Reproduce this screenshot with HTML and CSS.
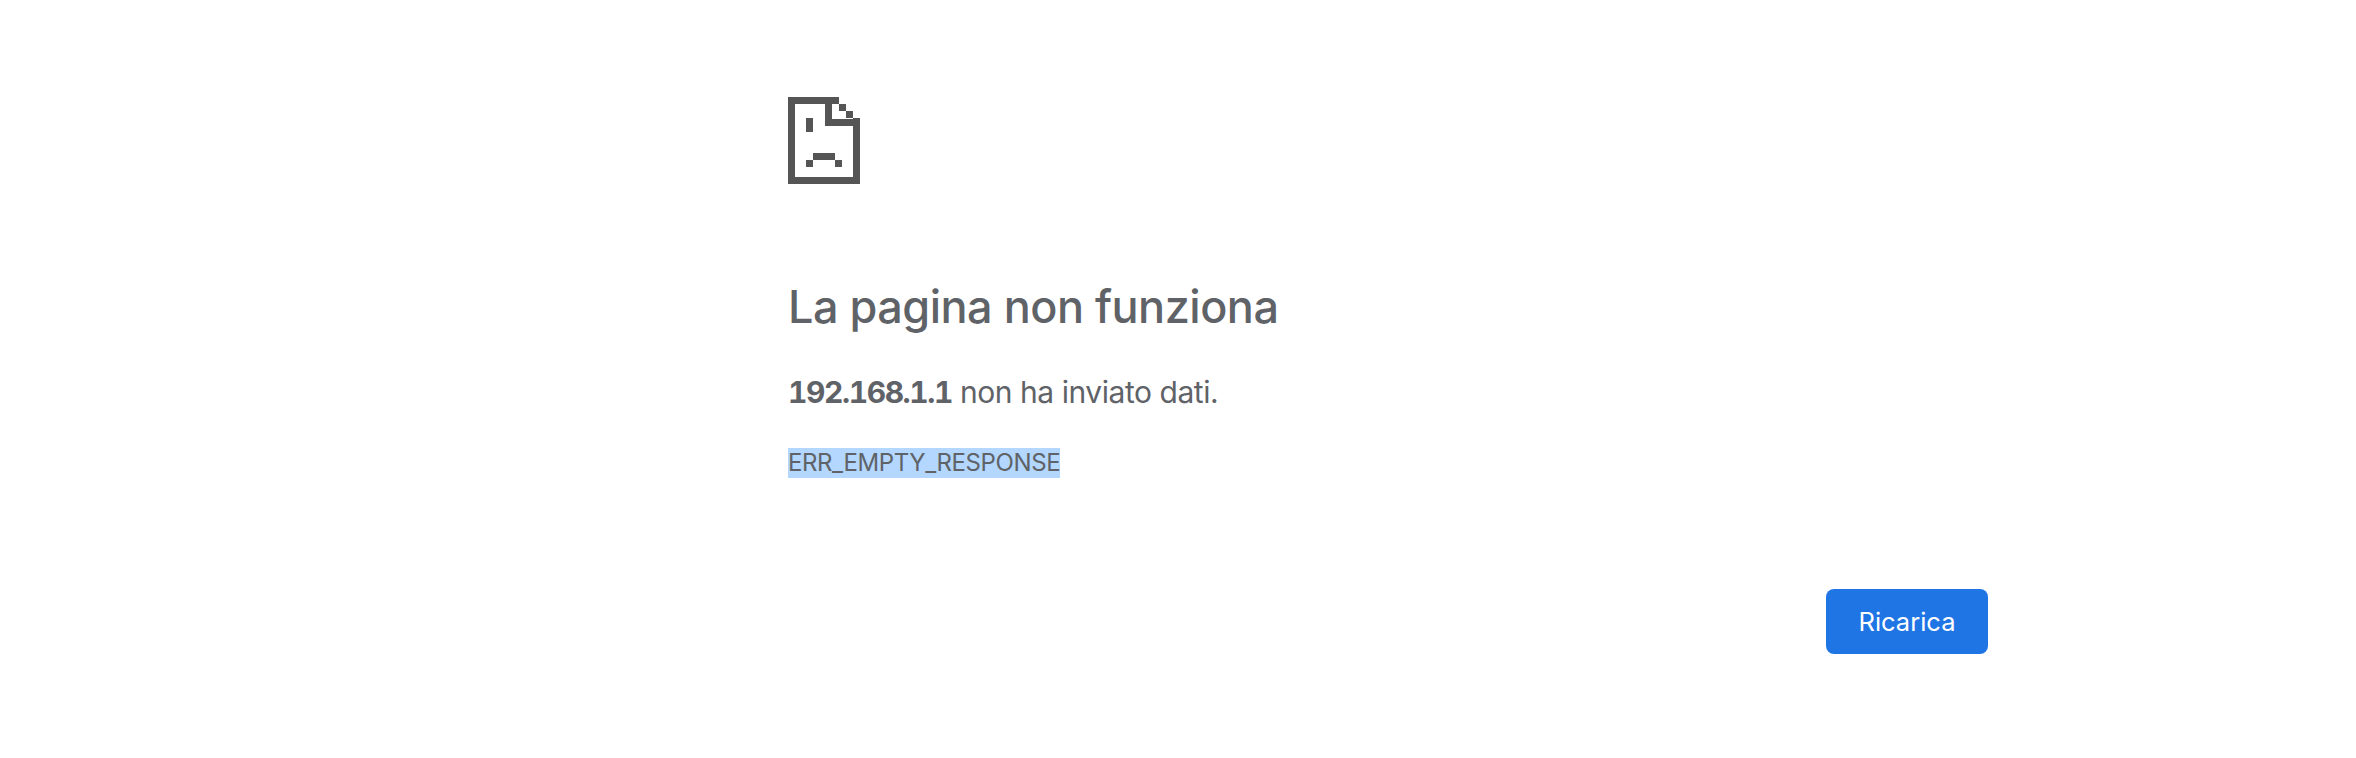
FILE: index.html
```html
<!DOCTYPE html>
<html lang="it">
<head>
<meta charset="utf-8">
<title>192.168.1.1</title>
<link rel="stylesheet" href="styles.css">
</head>
<body>
<main class="page">
  <svg class="icon" width="72" height="87" viewBox="0 0 72 87" shape-rendering="crispEdges" aria-hidden="true">
    <path class="icon-shape" d="M0 0H51V7H7V80H65V29H72V87H0Z"/>
    <path class="icon-shape" d="M37 7H44V22H65V29H37Z"/>
    <rect class="icon-shape" x="51" y="7" width="7" height="7"/>
    <rect class="icon-shape" x="58" y="14" width="7" height="7"/>
    <rect class="icon-shape" x="65" y="21" width="7" height="8"/>
    <rect class="icon-shape" x="18" y="21" width="7" height="14"/>
    <rect class="icon-shape" x="25" y="56" width="22" height="7"/>
    <rect class="icon-shape" x="18" y="63" width="7" height="7"/>
    <rect class="icon-shape" x="47" y="63" width="7" height="7"/>
  </svg>
  <h1 class="title">La pagina non funziona</h1>
  <p class="message"><strong>192.168.1.1</strong> non ha inviato dati.</p>
  <div class="code"><span class="selected">ERR_EMPTY_RESPONSE</span></div>
  <div class="actions"><button class="reload" type="button">Ricarica</button></div>
</main>
</body>
</html>
```

FILE: styles.css
```css
html, body {
  margin: 0;
  background: #fff;
}
.page {
  box-sizing: border-box;
  height: 758px;
  padding: 97px 368px 0 788px;
  font-family: Inter, "Liberation Sans", sans-serif;
  color: #5f6368;
}
.icon {
  display: block;
  margin: 0;
}
.icon-shape {
  fill: #555;
}
.title {
  margin: 95px 0 0;
  font-size: 45px;
  line-height: 56px;
  font-weight: 550;
  letter-spacing: -0.5px;
}
.message {
  margin: 36px 0 0;
  font-size: 30px;
  line-height: 42px;
  letter-spacing: -0.45px;
}
.message strong {
  font-weight: 700;
  font-variant-numeric: tabular-nums;
  letter-spacing: -1.4px;
}
.code {
  margin: 35px 0 0;
  font-size: 24px;
  line-height: 30px;
  letter-spacing: -0.4px;
}
.selected {
  display: inline-block;
  background: #b3d7fe;
}
.actions {
  display: flex;
  justify-content: flex-end;
  margin-top: 111px;
}
.reload {
  width: 162px;
  height: 65px;
  padding: 0;
  border: 0;
  border-radius: 8px;
  background: #2075e5;
  color: #fff;
  font: 400 25.5px Inter, "Liberation Sans", sans-serif;
}
```
